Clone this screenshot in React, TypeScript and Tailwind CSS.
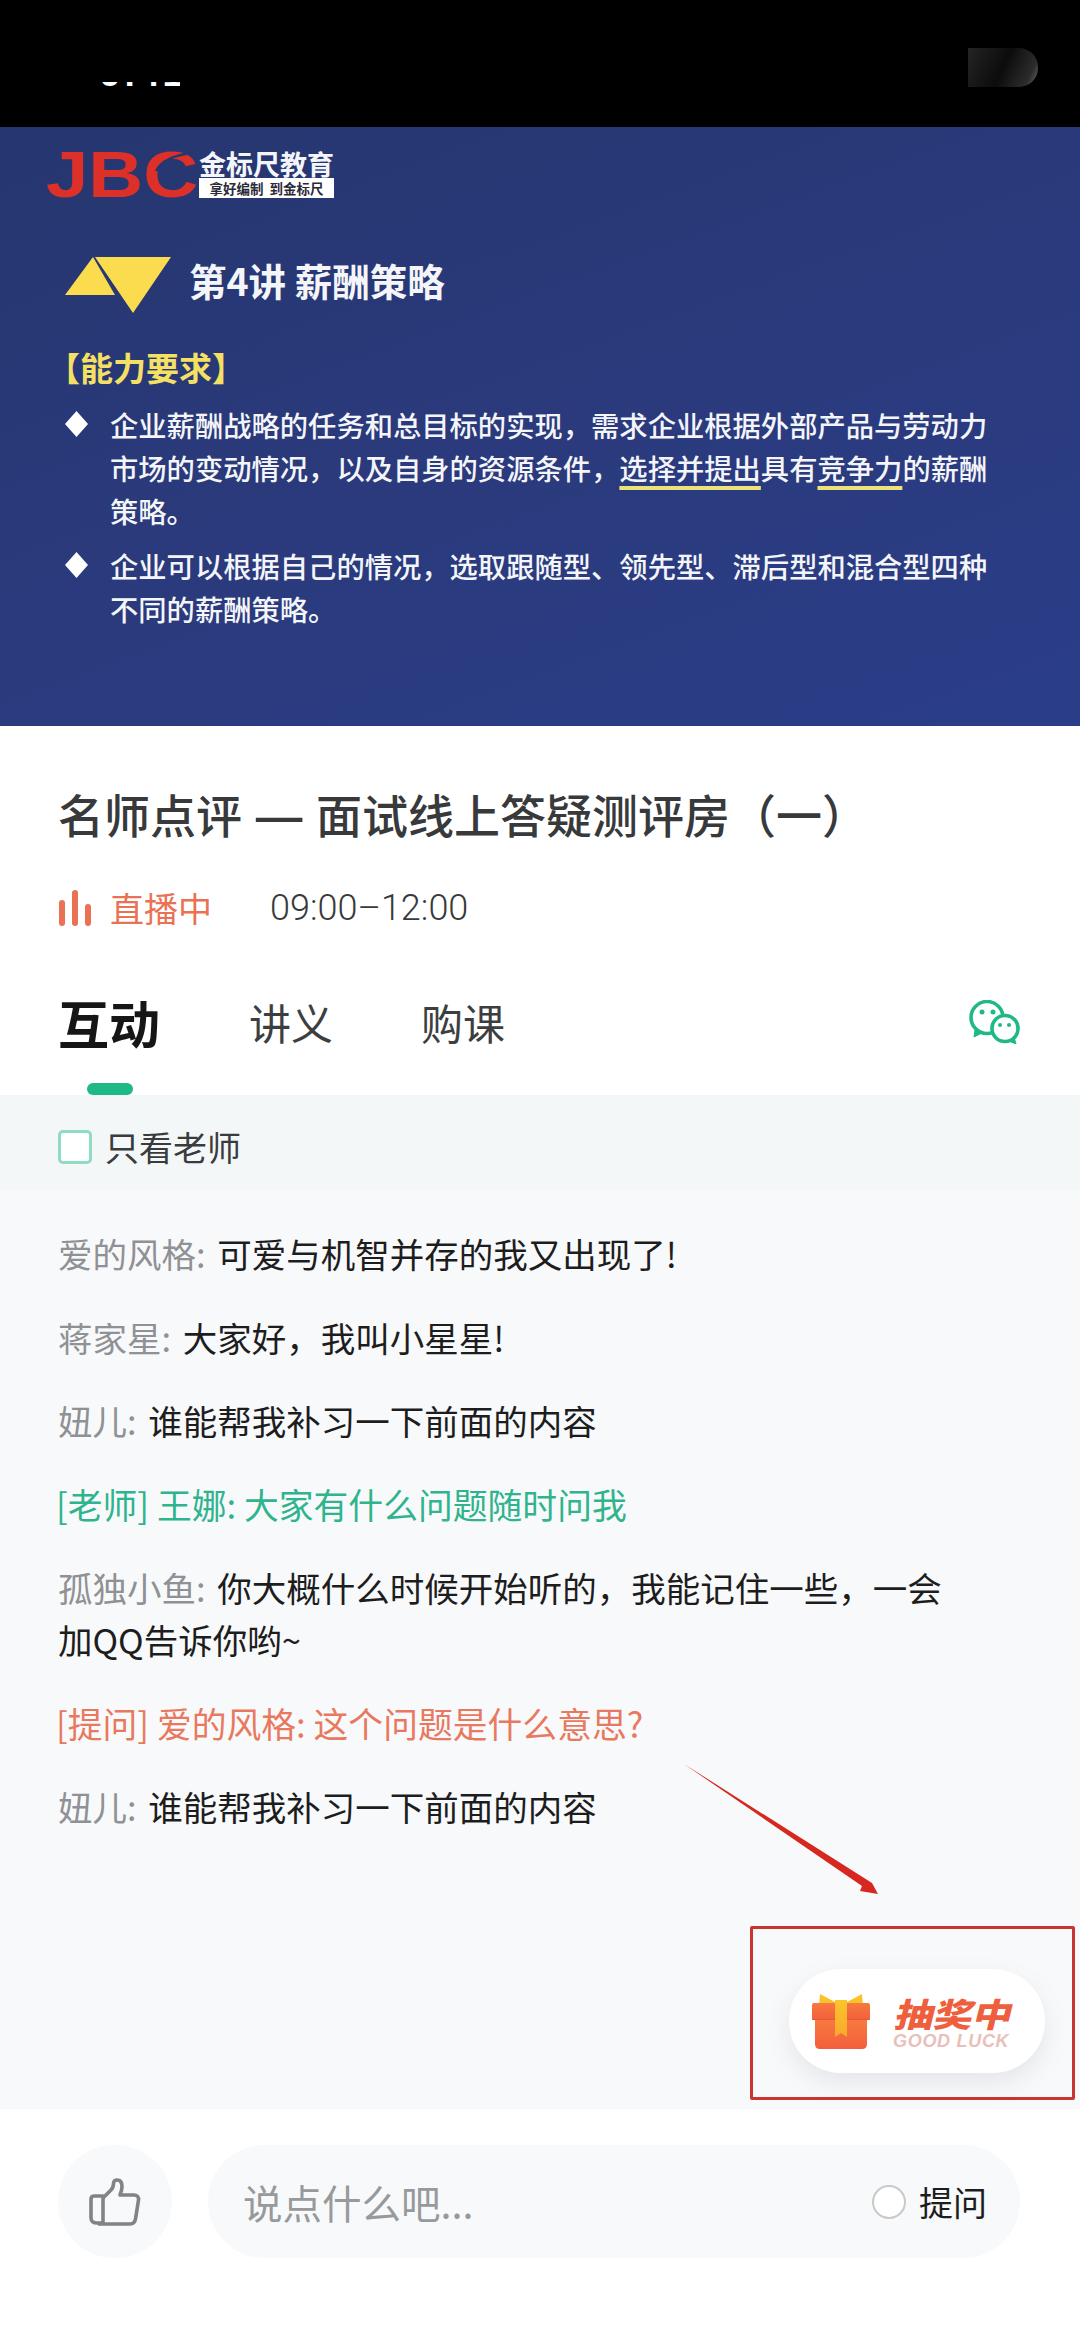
import React from "react";

const CJK = "font-['Noto_Sans_CJK_SC','Noto_Sans',sans-serif]";

function Bullet({ children }: { children: React.ReactNode }) {
  return (
    <div className="flex">
      <svg width="23" height="26" viewBox="0 0 23 26" className="mt-[8px] ml-[65px] shrink-0">
        <polygon points="11.5,0 23,13 11.5,26 0,13" fill="#ffffff" />
      </svg>
      <p className="ml-[22px] w-[885px] text-[28.3px] font-medium leading-[43px] text-[#f4f5f8]">{children}</p>
    </div>
  );
}

function Msg({ name, text }: { name: string; text: string }) {
  return (
    <p className="max-w-[905px] text-[34.5px] leading-[52px] text-[#1d1d1d]">
      <span className="mr-[4px] text-[#8f9194]">{name}: </span>
      {text}
    </p>
  );
}

function Gift() {
  return (
    <svg width="58" height="58" viewBox="0 0 58 58" className="shrink-0">
      <defs>
        <linearGradient id="box" x1="0" y1="0" x2="0" y2="1">
          <stop offset="0" stopColor="#f8793f" />
          <stop offset="1" stopColor="#f25f3c" />
        </linearGradient>
        <linearGradient id="rib" x1="0" y1="0" x2="0" y2="1">
          <stop offset="0" stopColor="#fbc52b" />
          <stop offset="1" stopColor="#f8a82c" />
        </linearGradient>
      </defs>
      <path d="M8 2 L23 10 L23 14 L7 14 Z" fill="#f9c22a" />
      <path d="M50 2 L35 10 L35 14 L51 14 Z" fill="#f9c22a" />
      <path d="M3 27 H55 V52 Q55 57 50 57 H8 Q3 57 3 52 Z" fill="url(#box)" />
      <rect x="0" y="11" width="58" height="17" rx="2" fill="url(#box)" />
      <rect x="0" y="27" width="58" height="1" fill="#e0583a" />
      <path d="M23 8 H35 V45 L29 41 L23 45 Z" fill="url(#rib)" />
    </svg>
  );
}

export default function App() {
  return (
    <div className={`flex h-[2339px] w-[1080px] flex-col overflow-hidden bg-white ${CJK}`}>
      {/* status bar */}
      <div className="relative h-[127px] shrink-0 bg-black">
        <div className="absolute left-[100px] top-[82px] h-[5px] w-[80px] overflow-hidden">
          <div className="-mt-[27px] font-['Liberation_Sans',sans-serif] text-[37px] font-bold leading-[38px] tracking-[3px] text-white">9:41</div>
        </div>
        <div className="absolute left-[968px] top-[48px] h-[39px] w-[70px] rounded-r-[19px] bg-[linear-gradient(115deg,#242424_0%,#0c0c0c_50%,#2c2c2c_85%,#6e6e6e_100%)]" />
      </div>

      {/* banner */}
      <div className="flex h-[599px] shrink-0 flex-col bg-[linear-gradient(160deg,#26366f_0%,#2a3a7c_50%,#2a3d88_100%)] pt-[24px]">
        <div className="ml-[46px] flex h-[47px] items-start">
          <div className="relative h-[47px] w-[147px]">
            <span className="block origin-left scale-x-[1.17] font-['Liberation_Sans',sans-serif] text-[65px] font-bold leading-[47px] text-[#dc3028]">JBC</span>
            <svg width="40" height="20" viewBox="0 0 40 20" fill="none" className="absolute left-[108px] top-[1px]">
              <path d="M2 19C8 8 20 3 38 1" stroke="#26366f" strokeWidth="2.5" />
            </svg>
          </div>
          <div className="ml-[6px] flex w-[135px] flex-col">
            <span className="h-[27px] whitespace-nowrap text-[27px] font-bold leading-[25px] text-[#f4f5f8]">金标尺教育</span>
            <span className="flex h-[20px] items-center justify-center whitespace-nowrap bg-white text-[13.5px] font-bold leading-[20px] text-[#2b2b38]">拿好编制&nbsp;&nbsp;到金标尺</span>
          </div>
        </div>

        <div className="ml-[65px] mt-[59px] flex h-[56px] items-start">
          <svg width="106" height="56" viewBox="0 0 106 56" className="shrink-0">
            <polygon points="0,38 28,0 50,38" fill="#fbdc4e" />
            <polygon points="30,0 106,0 68,56" fill="#fbdc4e" />
          </svg>
          <h1 className="ml-[18px] whitespace-nowrap text-[37.5px] font-bold leading-[46px] text-[#f4f5f8]">第4讲 薪酬策略</h1>
        </div>

        <div className="ml-[47px] mt-[30px] text-[33px] font-bold leading-[48px] text-[#f4e063]">【能力要求】</div>

        <div className="mt-[12px] flex flex-col gap-[12px]">
          <Bullet>
            企业薪酬战略的任务和总目标的实现，需求企业根据外部产品与劳动力市场的变动情况，以及自身的资源条件，
            <span className="underline decoration-[#ede27a] decoration-[4px] underline-offset-[6px]">选择并提出</span>
            具有
            <span className="underline decoration-[#ede27a] decoration-[4px] underline-offset-[6px]">竞争力</span>
            的薪酬策略。
          </Bullet>
          <Bullet>企业可以根据自己的情况，选取跟随型、领先型、滞后型和混合型四种不同的薪酬策略。</Bullet>
        </div>
      </div>

      {/* info */}
      <div className="relative h-[369px] shrink-0 bg-white px-[58px] pt-[57px]">
        <h2 className="whitespace-nowrap text-[46px] font-medium leading-[60px] text-[#38393b]">
          名师点评
          <span className="ml-[11px] mr-[17px] inline-block w-[46px] origin-left scale-x-[1.25] font-bold">—</span>
          面试线上答疑测评房（一）
        </h2>
        <div className="mt-[41px] flex h-[48px] items-center">
          <svg width="34" height="36" viewBox="0 0 34 36" className="shrink-0">
            <rect x="1" y="10" width="6" height="26" rx="3" fill="#ea7154" />
            <rect x="14" y="0" width="6" height="36" rx="3" fill="#ea7154" />
            <rect x="27" y="14" width="6" height="22" rx="3" fill="#ea7154" />
          </svg>
          <span className="ml-[18px] text-[34px] leading-[48px] text-[#ea7154]">直播中</span>
          <span className="ml-[58px] font-['Roboto',sans-serif] text-[36px] font-light leading-[48px] text-[#38393b]">09:00–12:00</span>
        </div>
        <div className="mt-[56px] flex h-[68px] items-center">
          <span className="w-[191px] text-[51px] font-bold leading-[68px] text-[#161616]">互动</span>
          <span className="w-[172px] text-[42px] leading-[68px] text-[#3d3e40]">讲义</span>
          <span className="text-[42px] leading-[68px] text-[#3d3e40]">购课</span>
          <svg width="52" height="44" viewBox="0 0 52 44" fill="none" stroke="#1fb985" strokeWidth="3.6" className="ml-auto mr-[2px] shrink-0">
            <circle cx="19" cy="17.500" r="16" />
            <path d="M7 30L6 37L14 33Z" fill="#1fb985" strokeWidth="1" />
            <circle cx="37" cy="28.500" r="13" fill="#ffffff" />
            <path d="M46 37L48 44L41 41Z" fill="#1fb985" strokeWidth="1" />
            <circle cx="14" cy="12" r="2.500" fill="#1fb985" stroke="none" />
            <circle cx="25" cy="12" r="2.500" fill="#1fb985" stroke="none" />
            <circle cx="32" cy="25" r="2" fill="#1fb985" stroke="none" />
            <circle cx="41" cy="25" r="2" fill="#1fb985" stroke="none" />
          </svg>
        </div>
        <div className="absolute bottom-0 left-[87px] h-[12px] w-[46px] rounded-full bg-[#1fb985]" />
      </div>

      {/* chat */}
      <div className="relative flex h-[1014px] shrink-0 flex-col bg-[#f8f9fb]">
        <div className="flex h-[95px] shrink-0 items-center bg-[#f3f7f8] px-[58px] pt-[8px]">
          <span className="h-[34px] w-[34px] rounded-[5px] border-[3px] border-[#8fdcc4] bg-white" />
          <span className="ml-[13px] text-[34px] leading-[48px] text-[#3a3b3d]">只看老师</span>
        </div>
        <div className="flex flex-col gap-[31.5px] px-[58px] pt-[37px]">
          <Msg name="爱的风格" text="可爱与机智并存的我又出现了!" />
          <Msg name="蒋家星" text="大家好，我叫小星星!" />
          <Msg name="妞儿" text="谁能帮我补习一下前面的内容" />
          <p className="-ml-[2px] text-[34.8px] leading-[52px] text-[#2fb48d]">[老师] 王娜: 大家有什么问题随时问我</p>
          <Msg name="孤独小鱼" text="你大概什么时候开始听的，我能记住一些，一会加QQ告诉你哟~" />
          <p className="-ml-[2px] text-[34.8px] leading-[52px] text-[#e8795e]">[提问] 爱的风格: 这个问题是什么意思?</p>
          <Msg name="妞儿" text="谁能帮我补习一下前面的内容" />
        </div>

        <svg width="196" height="132" viewBox="0 0 196 132" className="absolute left-[684px] top-[669px]">
          <polygon points="0,0 188,119 194,130 176,127 178,122" fill="#d6281f" />
        </svg>

        <div className="absolute left-[750px] top-[831px] h-[174px] w-[325px] rounded-[2px] border-[3px] border-[#c9352f]">
          <div className="ml-[36px] mt-[40px] flex h-[104px] w-[256px] items-center rounded-full bg-white pl-[23px] shadow-[0_10px_24px_rgba(120,120,130,0.14)]">
            <Gift />
            <div className="ml-[23px] flex flex-col">
              <span className="block origin-bottom -skew-x-12 scale-y-[0.85] whitespace-nowrap text-[39px] font-black leading-[36px] text-[#ef5f3e]">抽奖中</span>
              <span className="mt-[4px] whitespace-nowrap font-['Liberation_Sans',sans-serif] text-[18px] font-bold italic leading-[18px] tracking-[0.7px] text-[#e9c0b9]">GOOD LUCK</span>
            </div>
          </div>
        </div>
      </div>

      {/* input bar */}
      <div className="flex flex-1 items-start bg-white px-[58px] pt-[36px]">
        <div className="flex h-[113px] w-[114px] shrink-0 items-center justify-center rounded-full bg-[#f7f9fa]">
          <svg width="52" height="48" viewBox="0 0 52 48" fill="none" stroke="#828385" strokeWidth="3.600" strokeLinejoin="round">
            <path d="M2 21c0-2 1.500-3 3.500-3H14v27H8c-3.500 0-6-1.500-6-5z" />
            <path d="M14 20l8-8c2-2 2.500-4 2.500-6.500C24.500 3 26 2 28 2c3.500 0 5 3 5 6.500 0 3-1 6-2 8.500h14c3 0 5 2 4.500 5l-3 19c-.5 3-2.500 5-5.500 5H9" />
          </svg>
        </div>
        <div className="ml-[36px] flex h-[113px] w-[812px] items-center rounded-full bg-[#f7f9fa] pl-[35px] pr-[33px]">
          <span className="text-[39.5px] leading-[50px] text-[#98999b]">说点什么吧...</span>
          <span className="ml-auto h-[34px] w-[34px] rounded-full border-2 border-[#c9c9c9] bg-white" />
          <span className="ml-[13px] text-[34px] leading-[48px] text-[#1d1d1d]">提问</span>
        </div>
      </div>
    </div>
  );
}
